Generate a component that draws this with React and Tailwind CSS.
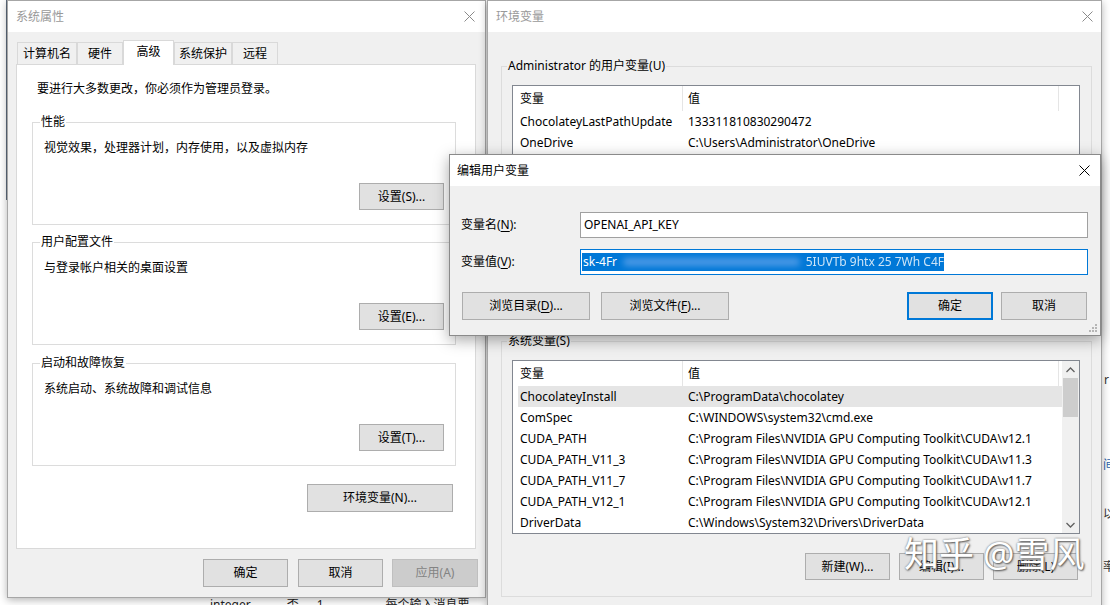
import React from "react";

function CloseX({ color }) {
  return (
    <svg width="11" height="11" viewBox="0 0 11 11">
      <path d="M0.5 0.5L10.5 10.5M10.5 0.5L0.5 10.5" stroke={color} strokeWidth="1" fill="none" />
    </svg>
  );
}

function Btn({ children, className = "", disabled, primary }) {
  return (
    <div
      className={`flex items-center justify-center border text-[12px] ${
        disabled
          ? "border-[#bfbfbf] bg-[#cccccc] text-[#838383]"
          : primary
          ? "border-[#0078d7] bg-[#e1e1e1] text-black shadow-[inset_0_0_0_1px_#0078d7]"
          : "border-[#adadad] bg-[#e1e1e1] text-black"
      } ${className}`}
    >
      {children}
    </div>
  );
}

function Group({ label, bg, labelClass = "ml-[7px]", className = "", inner = "", children }) {
  return (
    <div className={`flex flex-col border border-[#dcdcdc] ${className}`}>
      <div className={`-mt-[9px] w-fit px-[1px] leading-[16px] ${labelClass} ${bg}`}>{label}</div>
      <div className={`flex flex-1 flex-col ${inner}`}>{children}</div>
    </div>
  );
}

function U({ children }) {
  return <span className="underline underline-offset-2">{children}</span>;
}

function Chevron({ up }) {
  return (
    <svg width="9" height="6" viewBox="0 0 9 6">
      <path d={up ? "M0.5 5L4.5 1L8.5 5" : "M0.5 1L4.5 5L8.5 1"} stroke="#606060" strokeWidth="1.3" fill="none" />
    </svg>
  );
}

function VarList({ rows, scroll, selected }) {
  return (
    <div className="flex h-[174px] w-[568px] border border-[#828790] bg-white">
      <div className="flex flex-1 flex-col">
        <div className="flex h-[25px] items-center">
          <div className="h-full w-[170px] border-r border-[#e5e5e5] pl-[7px] leading-[25px]">变量</div>
          <div className="h-full w-[376px] border-r border-[#e5e5e5] pl-[5px] leading-[25px]">值</div>
        </div>
        {rows.map(([k, v], i) => (
          <div
            key={k}
            className={`ml-[5px] flex h-[21px] items-center ${i === selected ? "bg-[#e5e5e5]" : ""}`}
          >
            <div className="w-[168px] pl-[2px]">{k}</div>
            <div className="pl-[2px] whitespace-nowrap">{v}</div>
          </div>
        ))}
      </div>
      {scroll && (
        <div className="flex w-[17px] flex-col items-center bg-[#f0f0f0]">
          <div className="flex h-[17px] items-center">
            <Chevron up />
          </div>
          <div className="h-[39px] w-[15px] bg-[#cdcdcd]" />
          <div className="flex-1" />
          <div className="flex h-[17px] items-center">
            <Chevron />
          </div>
        </div>
      )}
    </div>
  );
}

const userRows = [
  ["ChocolateyLastPathUpdate", "133311810830290472"],
  ["OneDrive", "C:\\Users\\Administrator\\OneDrive"],
  ["Path", "C:\\Users\\Administrator\\AppData\\Local\\Microsoft\\WindowsApps;"],
  ["TEMP", "C:\\Users\\Administrator\\AppData\\Local\\Temp"],
  ["TMP", "C:\\Users\\Administrator\\AppData\\Local\\Temp"],
];

const sysRows = [
  ["ChocolateyInstall", "C:\\ProgramData\\chocolatey"],
  ["ComSpec", "C:\\WINDOWS\\system32\\cmd.exe"],
  ["CUDA_PATH", "C:\\Program Files\\NVIDIA GPU Computing Toolkit\\CUDA\\v12.1"],
  ["CUDA_PATH_V11_3", "C:\\Program Files\\NVIDIA GPU Computing Toolkit\\CUDA\\v11.3"],
  ["CUDA_PATH_V11_7", "C:\\Program Files\\NVIDIA GPU Computing Toolkit\\CUDA\\v11.7"],
  ["CUDA_PATH_V12_1", "C:\\Program Files\\NVIDIA GPU Computing Toolkit\\CUDA\\v12.1"],
  ["DriverData", "C:\\Windows\\System32\\Drivers\\DriverData"],
];

const tabs = [
  ["计算机名", "w-[60px]"],
  ["硬件", "w-[46px]"],
  ["高级", "w-[51px]"],
  ["系统保护", "w-[58px]"],
  ["远程", "w-[46px]"],
];

export default function App() {
  return (
    <div className="relative h-[605px] w-[1110px] overflow-hidden bg-white font-['Noto_Sans','Noto_Sans_CJK_SC',sans-serif] text-[12px] text-black">
      {/* desktop behind the windows */}
      <div className="absolute left-[6px] top-0 h-[200px] w-[1px] bg-[#5d6b7c]" />
      <div className="absolute left-0 top-[597px] flex w-[490px] text-[12px] leading-[16px] text-[#222]">
        <span className="ml-[210px]">integer</span>
        <span className="ml-[36px]">否</span>
        <span className="ml-[18px]">1</span>
        <span className="ml-[62px]">每个输入消息要</span>
      </div>
      <div className="absolute left-[1104px] top-[371px] text-[12px] text-[#333]">r</div>
      <div className="absolute left-[1103px] top-[456px] text-[12px] text-[#1f5fa8]">间</div>
      <div className="absolute left-[1103px] top-[505px] text-[12px] text-[#333]">以</div>
      <div className="absolute left-[1103px] top-[558px] text-[12px] text-[#333]">率</div>

      {/* 系统属性 */}
      <div className="absolute left-[7px] top-0 flex h-[598px] w-[479px] flex-col border border-[#a6a6a6] bg-[#f0f0f0] shadow-[0_2px_8px_rgba(0,0,0,0.3)]">
        <div className="flex h-[31px] items-center justify-between bg-white pl-[8px] pr-[10px] text-[#999]">
          <span>系统属性</span>
          <CloseX color="#8a8a8a" />
        </div>
        <div className="flex flex-col px-[8px] pt-[8px]">
          <div className="flex h-[24px] items-end pl-[1px]">
            {tabs.map(([t, w]) =>
              t === "高级" ? (
                <div
                  key={t}
                  className={`relative z-10 -mb-[1px] flex h-[25px] items-center justify-center border border-b-0 border-[#d9d9d9] bg-white pb-[3px] ${w}`}
                >
                  {t}
                </div>
              ) : (
                <div
                  key={t}
                  className={`flex h-[22px] items-center justify-center border border-b-0 border-[#d9d9d9] bg-[#f0f0f0] ${w}`}
                >
                  {t}
                </div>
              )
            )}
          </div>
          <div className="flex h-[485px] w-[460px] flex-col border border-[#d9d9d9] bg-white">
            <div className="mt-[16px] pl-[20px] leading-[16px]">要进行大多数更改，你必须作为管理员登录。</div>
            <div className="ml-[15px] flex w-[424px] flex-col">
              <Group label="性能" bg="bg-white" className="mt-[25px] h-[103px]" inner="px-[11px] pb-[14px]">
                <div className="mt-[10px] leading-[16px]">视觉效果，处理器计划，内存使用，以及虚拟内存</div>
                <Btn className="mt-auto h-[27px] w-[85px] self-end">设置(S)...</Btn>
              </Group>
              <Group label="用户配置文件" bg="bg-white" className="mt-[17px] h-[103px]" inner="px-[11px] pb-[14px]">
                <div className="mt-[10px] leading-[16px]">与登录帐户相关的桌面设置</div>
                <Btn className="mt-auto h-[27px] w-[85px] self-end">设置(E)...</Btn>
              </Group>
              <Group label="启动和故障恢复" bg="bg-white" className="mt-[18px] h-[103px]" inner="px-[11px] pb-[14px]">
                <div className="mt-[10px] leading-[16px]">系统启动、系统故障和调试信息</div>
                <Btn className="mt-auto h-[27px] w-[85px] self-end">设置(T)...</Btn>
              </Group>
              <Btn className="mr-[3px] mt-[18px] h-[28px] w-[146px] self-end">环境变量(N)...</Btn>
            </div>
          </div>
          <div className="-mr-[1px] mt-[10px] flex justify-end">
            <Btn className="h-[28px] w-[85px]">确定</Btn>
            <Btn className="ml-[10px] h-[28px] w-[85px]">取消</Btn>
            <Btn className="ml-[9px] h-[28px] w-[86px]" disabled>
              应用(A)
            </Btn>
          </div>
        </div>
      </div>

      {/* 环境变量 */}
      <div className="absolute left-[487px] top-0 flex h-[640px] w-[615px] flex-col border border-[#a6a6a6] bg-[#f0f0f0] shadow-[0_2px_8px_rgba(0,0,0,0.3)]">
        <div className="flex h-[31px] items-center justify-between bg-white pl-[8px] pr-[8px] text-[#999]">
          <span>环境变量</span>
          <CloseX color="#8a8a8a" />
        </div>
        <div className="ml-[13px] mt-[34px] flex w-[591px] flex-col">
          <Group label="Administrator 的用户变量(U)" bg="bg-[#f0f0f0]" labelClass="ml-[5px]" className="h-[258px]">
            <div className="ml-[10px] mt-[11px]">
              <VarList rows={userRows} />
            </div>
            <div className="mt-[19px] flex justify-end gap-[9px] pr-[13px]">
              <Btn className="h-[27px] w-[85px]">新建(N)...</Btn>
              <Btn className="h-[27px] w-[85px]">编辑(E)...</Btn>
              <Btn className="h-[27px] w-[85px]">删除(D)</Btn>
            </div>
          </Group>
          <Group label="系统变量(S)" bg="bg-[#f0f0f0]" labelClass="ml-[5px]" className="mt-[17px]" inner="pb-[16px]">
            <div className="ml-[10px] mt-[11px]">
              <VarList rows={sysRows} scroll selected={0} />
            </div>
            <div className="mt-[19px] flex justify-end gap-[9px] pr-[13px]">
              <Btn className="h-[27px] w-[85px]">新建(W)...</Btn>
              <Btn className="h-[27px] w-[85px]">编辑(I)...</Btn>
              <Btn className="h-[27px] w-[85px]">删除(L)</Btn>
            </div>
          </Group>
        </div>
      </div>

      {/* 编辑用户变量 */}
      <div className="absolute left-[449px] top-[154px] flex h-[182px] w-[652px] flex-col border border-[#8a8a8a] bg-[#f0f0f0] shadow-[0_4px_14px_rgba(0,0,0,0.35)]">
        <div className="flex h-[31px] items-center justify-between bg-white pl-[7px] pr-[10px]">
          <span>编辑用户变量</span>
          <CloseX color="#000" />
        </div>
        <div className="relative flex flex-1 flex-col pt-[26px]">
          <div className="flex items-center">
            <div className="w-[130px] pl-[11px]">
              变量名(<U>N</U>):
            </div>
            <div className="flex h-[26px] w-[508px] items-center border border-[#a0a0a0] bg-white pl-[3px]">OPENAI_API_KEY</div>
          </div>
          <div className="mt-[11px] flex items-center">
            <div className="w-[130px] pl-[11px]">
              变量值(<U>V</U>):
            </div>
            <div className="flex h-[26px] w-[508px] items-center border border-[#0078d7] bg-white pl-[1px]">
              <div className="flex h-[18px] w-[362px] items-center overflow-hidden bg-[#0078d7] pl-[1px] text-white">
                <span>sk-4Fr</span>
                <div className="mx-[6px] h-[8px] flex-1 rounded-full bg-[#4d9ae6] blur-[3px]" />
                <span className="text-white/80 blur-[0.7px]">5IUVTb 9htx 25 7Wh C4F</span>
              </div>
            </div>
          </div>
          <div className="mt-[17px] flex items-center gap-[11px] pl-[12px] pr-[13px]">
            <Btn className="h-[28px] w-[128px]">
              浏览目录(<U>D</U>)...
            </Btn>
            <Btn className="h-[28px] w-[128px]">
              浏览文件(<U>F</U>)...
            </Btn>
            <Btn className="ml-auto h-[28px] w-[86px]" primary>
              确定
            </Btn>
            <Btn className="ml-[-3px] h-[28px] w-[86px]">取消</Btn>
          </div>
          <svg className="absolute bottom-[2px] right-[2px]" width="9" height="9" viewBox="0 0 9 9">
            <g fill="#b5b5b5">
              <rect x="6" y="0" width="2" height="2" />
              <rect x="3" y="3" width="2" height="2" />
              <rect x="6" y="3" width="2" height="2" />
              <rect x="0" y="6" width="2" height="2" />
              <rect x="3" y="6" width="2" height="2" />
              <rect x="6" y="6" width="2" height="2" />
            </g>
          </svg>
        </div>
      </div>

      {/* watermark */}
      <div className="absolute left-[904px] top-[532px] text-[35px] leading-[44px] text-white [text-shadow:0_0_2px_#6b6b6b,1px_1px_2px_#555]">
        知乎 @雪风
      </div>
    </div>
  );
}
